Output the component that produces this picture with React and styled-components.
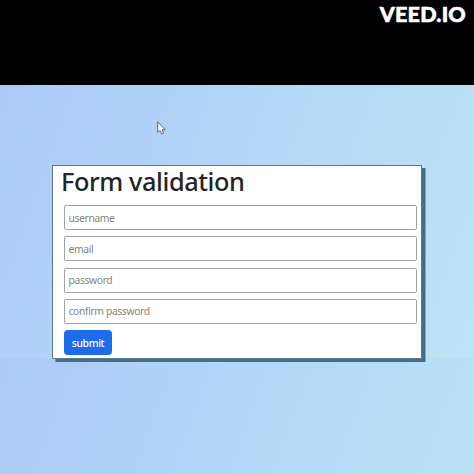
import React from 'react';
import styled, { createGlobalStyle } from 'styled-components';

const GlobalStyle = createGlobalStyle`
  * {
    box-sizing: border-box;
  }

  body {
    margin: 0;
    overflow: hidden;
    font-family: 'Noto Sans', 'Open Sans', sans-serif;
  }
`;

const Page = styled.div`
  display: flex;
  flex-direction: column;
  width: 474px;
  height: 474px;
`;

const TopBar = styled.header`
  display: flex;
  justify-content: flex-end;
  height: 85px;
  padding: 1px 8px 0 0;
  background-color: #000;
`;

const Brand = styled.span`
  color: white;
  font-family: Lato, sans-serif;
  font-size: 21.5px;
  font-weight: 900;
  line-height: 27px;
  letter-spacing: 0.2px;
  -webkit-text-stroke: 0.6px white;
`;

const Stage = styled.main`
  position: relative;
  flex: 1;
  padding: 80px 52px 0;
  background-image: linear-gradient(110deg, #abcaf8 0%, #bde4f6 100%);
  background-size: 480px 273px;
  background-position: center top;
`;

const Cursor = styled.svg`
  position: absolute;
  top: 35.5px;
  left: 157px;
`;

const Form = styled.form`
  display: flex;
  flex-direction: column;
  align-items: flex-start;
  width: 370px;
  height: 194px;
  padding: 0 4px 0 8px;
  background-color: white;
  border: 1px solid #5f7690;
  box-shadow: 3.5px 3px 0 #437087;
`;

const Title = styled.h1`
  margin: -2px 0 7px;
  color: #212529;
  font-size: 25.3px;
  font-weight: 500;
  line-height: 34px;
  letter-spacing: -0.4px;
  white-space: nowrap;
`;

const Fields = styled.div`
  display: flex;
  flex-direction: column;
  align-items: flex-start;
  gap: 6.25px;
  width: 100%;
  padding-left: 3px;
`;

const Input = styled.input`
  width: 353px;
  height: 25px;
  padding: 0 3.5px;
  color: #212529;
  background-color: white;
  border: 1px solid #a3a3a0;
  border-radius: 2px;
  font-family: inherit;
  font-size: 10.3px;
  letter-spacing: -0.36px;
  outline: none;

  &::placeholder {
    color: #85857c;
    opacity: 1;
  }
`;

const SubmitButton = styled.button`
  width: 48px;
  height: 25px;
  padding: 0;
  color: white;
  background-color: #1c6cec;
  border: none;
  border-radius: 4px;
  font-family: inherit;
  font-size: 10.3px;
  font-weight: 500;
  letter-spacing: -0.3px;
`;

const fields = [
  { name: 'username', placeholder: 'username' },
  { name: 'email', placeholder: 'email' },
  { name: 'password', placeholder: 'password' },
  { name: 'confirm', placeholder: 'confirm password' },
];

function App() {
  return (
    <>
      <GlobalStyle />
      <Page>
        <TopBar>
          <Brand>VEED.IO</Brand>
        </TopBar>
        <Stage>
          <Cursor width="10" height="14" viewBox="0 0 10 14" aria-hidden="true">
            <path
              d="M.7.8v10.6l2.3-1.9 1.7 3.4 1.9-.9-1.6-3.3h3.2z"
              fill="white"
              stroke="#4c5568"
              strokeWidth="0.9"
            />
          </Cursor>
          <Form onSubmit={(e) => e.preventDefault()}>
            <Title>Form validation</Title>
            <Fields>
              {fields.map((field) => (
                <Input key={field.name} name={field.name} placeholder={field.placeholder} />
              ))}
              <SubmitButton type="submit">submit</SubmitButton>
            </Fields>
          </Form>
        </Stage>
      </Page>
    </>
  );
}

export default App;
